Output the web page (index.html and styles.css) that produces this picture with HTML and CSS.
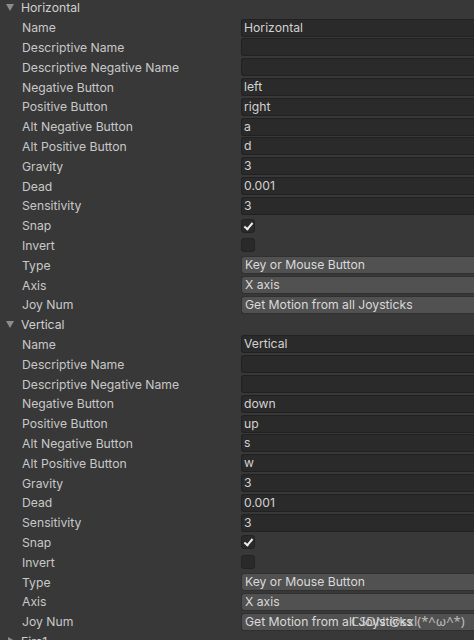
FILE: index.html
```html
<!DOCTYPE html>
<html lang="en">
  <head>
    <meta charset="UTF-8" />
    <title>Input Manager</title>
    <link rel="stylesheet" href="styles.css">
  </head>
  <body>
    <div class="axes">
      <!-- Horizontal -->
      <div class="axis-head"><span class="tri open"></span>Horizontal</div>
      <div class="row"><span class="label">Name</span><span class="field">Horizontal</span></div>
      <div class="row"><span class="label">Descriptive Name</span><span class="field"></span></div>
      <div class="row"><span class="label">Descriptive Negative Name</span><span class="field"></span></div>
      <div class="row"><span class="label">Negative Button</span><span class="field">left</span></div>
      <div class="row"><span class="label">Positive Button</span><span class="field">right</span></div>
      <div class="row"><span class="label">Alt Negative Button</span><span class="field">a</span></div>
      <div class="row"><span class="label">Alt Positive Button</span><span class="field">d</span></div>
      <div class="row"><span class="label">Gravity</span><span class="field">3</span></div>
      <div class="row"><span class="label">Dead</span><span class="field">0.001</span></div>
      <div class="row"><span class="label">Sensitivity</span><span class="field">3</span></div>
      <div class="row"><span class="label">Snap</span><span class="check on"></span></div>
      <div class="row"><span class="label">Invert</span><span class="check"></span></div>
      <div class="row"><span class="label">Type</span><span class="popup">Key or Mouse Button</span></div>
      <div class="row"><span class="label">Axis</span><span class="popup">X axis</span></div>
      <div class="row"><span class="label">Joy Num</span><span class="popup">Get Motion from all Joysticks</span></div>

      <!-- Vertical -->
      <div class="axis-head"><span class="tri open"></span>Vertical</div>
      <div class="row"><span class="label">Name</span><span class="field">Vertical</span></div>
      <div class="row"><span class="label">Descriptive Name</span><span class="field"></span></div>
      <div class="row"><span class="label">Descriptive Negative Name</span><span class="field"></span></div>
      <div class="row"><span class="label">Negative Button</span><span class="field">down</span></div>
      <div class="row"><span class="label">Positive Button</span><span class="field">up</span></div>
      <div class="row"><span class="label">Alt Negative Button</span><span class="field">s</span></div>
      <div class="row"><span class="label">Alt Positive Button</span><span class="field">w</span></div>
      <div class="row"><span class="label">Gravity</span><span class="field">3</span></div>
      <div class="row"><span class="label">Dead</span><span class="field">0.001</span></div>
      <div class="row"><span class="label">Sensitivity</span><span class="field">3</span></div>
      <div class="row"><span class="label">Snap</span><span class="check on"></span></div>
      <div class="row"><span class="label">Invert</span><span class="check"></span></div>
      <div class="row"><span class="label">Type</span><span class="popup">Key or Mouse Button</span></div>
      <div class="row"><span class="label">Axis</span><span class="popup">X axis</span></div>
      <div class="row"><span class="label">Joy Num</span><span class="popup">Get Motion from all Joysticks</span></div>

      <div class="axis-head"><span class="tri"></span>Fire1</div>
    </div>

    <div class="watermark">CSDN @sxl(*^ω^*)</div>
  </body>
</html>
```
FILE: styles.css
```css
body {
  margin: 0;
  padding: 0;
  background-color: #383838;
  font-family: Inter, "Noto Sans", sans-serif;
  font-size: 12.2px;
  color: #c8c8c8;
  overflow: hidden;
  height: 640px;
}

.axes {
  margin-top: -2px;
}

.axis-head {
  height: 19.8px;
  display: flex;
  align-items: center;
  padding-left: 6px;
  color: #d0d0d0;
}

.tri {
  width: 0;
  height: 0;
  margin-right: 7px;
  border-left: 4px solid transparent;
  border-right: 4px solid transparent;
  border-top: 7px solid #8c8c8c;
}

.tri:not(.open) {
  border-top: 4px solid transparent;
  border-bottom: 4px solid transparent;
  border-left: 7px solid #8c8c8c;
  border-right: none;
  margin-left: 2px;
  margin-right: 6px;
}

.row {
  height: 19.8px;
  display: flex;
  align-items: center;
}

.label {
  width: 219px;
  padding-left: 22px;
  flex: none;
  white-space: nowrap;
}

.field {
  flex: 1;
  height: 18px;
  box-sizing: border-box;
  background-color: #2a2a2a;
  border: 1px solid #212121;
  border-right: none;
  border-radius: 3px 0 0 3px;
  padding-left: 2px;
  line-height: 16px;
  color: #d2d2d2;
}

.check {
  width: 14px;
  height: 14px;
  box-sizing: border-box;
  background-color: #2a2a2a;
  border: 1px solid #222;
  border-radius: 3px;
  position: relative;
}

.check.on::after {
  content: "";
  position: absolute;
  left: 4px;
  top: 1px;
  width: 3px;
  height: 7px;
  border-right: 2px solid #eee;
  border-bottom: 2px solid #eee;
  transform: rotate(40deg);
}

.popup {
  flex: 1;
  height: 18px;
  box-sizing: border-box;
  background-color: #515151;
  border: 1px solid #303030;
  border-right: none;
  border-radius: 3px 0 0 3px;
  padding-left: 3px;
  line-height: 16px;
  color: #dadada;
}

.watermark {
  position: absolute;
  left: 351px;
  top: 612px;
  font-family: "Noto Sans", sans-serif;
  font-size: 13px;
  color: rgba(225, 225, 225, 0.75);
}
```
